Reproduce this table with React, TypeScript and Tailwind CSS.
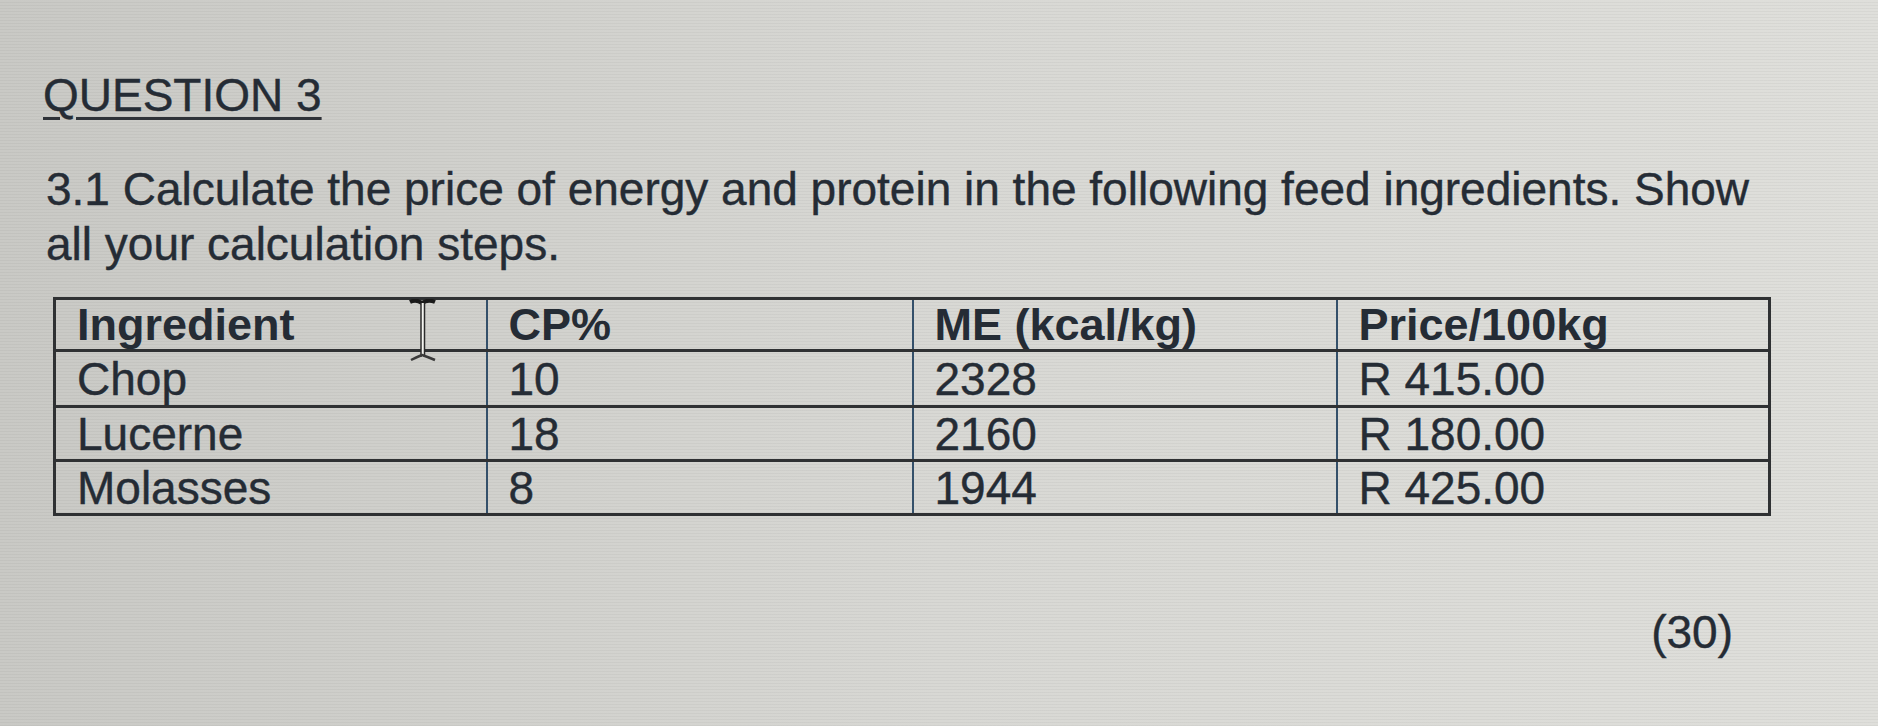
const rows = [
  {name: 'Chop', cp: '10', me: '2328', price: 'R 415.00'},
  {name: 'Lucerne', cp: '18', me: '2160', price: 'R 180.00'},
  {name: 'Molasses', cp: '8', me: '1944', price: 'R 425.00'},
];

const headers = ['Ingredient', 'CP%', 'ME (kcal/kg)', 'Price/100kg'];

function TextCursor() {
  // the mouse I-beam that sits over the header row in the photo
  return (
    <svg
      className="absolute left-[355px] top-[2px] pointer-events-none"
      width="30"
      height="64"
      viewBox="0 0 30 64"
    >
      <path d="M2 3 Q8 0 14 4 Q20 0 27 3" stroke="#1a1a1a" strokeWidth="4" fill="none" />
      <line x1="14.5" y1="4" x2="14.5" y2="58" stroke="#f4f4f0" strokeWidth="3" />
      <line x1="13" y1="4" x2="13" y2="58" stroke="#2b2b2b" strokeWidth="1.5" />
      <line x1="16.5" y1="4" x2="16.5" y2="58" stroke="#2b2b2b" strokeWidth="1.5" />
      <path d="M3 61 Q9 58 14 56 Q20 58 27 61" stroke="#3a3a3a" strokeWidth="2.5" fill="none" />
    </svg>
  );
}

export default function App() {
  return (
    <div className="relative w-full h-[726px] overflow-hidden bg-gradient-to-r from-[#c9c9c5] via-[#d8d8d4] to-[#dfdfdb] text-[#252c35] font-['Liberation_Sans',Arial,sans-serif] [-webkit-text-stroke:0.4px_#252c35]">
      <div className="absolute inset-0 pointer-events-none bg-[repeating-linear-gradient(0deg,rgba(0,0,0,0.035)_0px,rgba(0,0,0,0.035)_1px,transparent_1px,transparent_3px)]" />
      <div className="relative pl-[43px] pt-[69px]">
        <h2 className="text-[46px] leading-[53px] underline decoration-[3px] underline-offset-[6px] decoration-[#2e3238]">
          QUESTION 3
        </h2>
        <p className="mt-[40px] ml-[3px] w-[1760px] text-[46px] leading-[55px]">
          3.1 Calculate the price of energy and protein in the following feed ingredients. Show
          <br />
          all your calculation steps.
        </p>

        <div className="relative mt-[25px] ml-[10px] w-[1715px]">
          <table className="w-[1715px] table-fixed border-collapse border-[3px] border-[#2f3133]">
            <colgroup>
              <col className="w-[432px]" />
              <col className="w-[426px]" />
              <col className="w-[424px]" />
              <col className="w-[433px]" />
            </colgroup>
            <thead>
              <tr className="h-[50px]">
                {headers.map((h, i) => (
                  <th
                    key={h}
                    className={
                      'text-left font-bold text-[45px] leading-[48px] pl-[21px] pt-[1px] border-b-[3px] border-b-[#2f3133] [-webkit-text-stroke:0px] ' +
                      (i < 3 ? 'border-r-2 border-r-[#34506a]' : '')
                    }
                  >
                    {h}
                  </th>
                ))}
              </tr>
            </thead>
            <tbody>
              {rows.map((r, idx) => (
                <tr key={r.name} className={idx === 0 ? 'h-[56px]' : 'h-[53px]'}>
                  {[r.name, r.cp, r.me, r.price].map((v, i) => (
                    <td
                      key={i}
                      className={
                        'text-[46px] leading-[50px] pl-[21px] pt-[1px] border-b-[3px] border-b-[#2f3133] ' +
                        (i < 3 ? 'border-r-2 border-r-[#34506a]' : '')
                      }
                    >
                      {v}
                    </td>
                  ))}
                </tr>
              ))}
            </tbody>
          </table>
          <TextCursor />
        </div>

        <div className="flex justify-end pr-[145px] mt-[90px]">
          <span className="text-[46px] leading-[53px]">(30)</span>
        </div>
      </div>
    </div>
  );
}
